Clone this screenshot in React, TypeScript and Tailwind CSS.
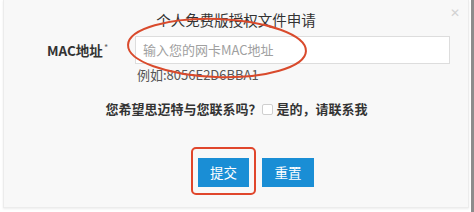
import React from "react";

export default function App() {
  const font = { fontFamily: '"Noto Sans CJK SC", "Noto Sans", sans-serif' };
  return (
    <div className="relative w-[474px] h-[212px] bg-white overflow-hidden" style={font}>
      <div className="absolute right-0 top-0 w-[3px] h-[212px] bg-[#8c8c8c]" />
      <div className="ml-[3px] w-[466px] h-[208px] bg-[#f8f8f8] border-l border-r border-b border-[#ececec] shadow-[0_1px_2px_rgba(0,0,0,0.08)] relative flex flex-col">
        <div className="absolute top-[6px] right-[8px] text-[#d2d2d2] text-[12px] leading-none">✕</div>
        <div className="pt-[10px] h-[33px] text-center text-[14.5px] leading-[20px] text-[#333]">
          个人免费版授权文件申请
        </div>
        <div className="flex items-center h-[28px] mt-[3px]">
          <div className="w-[131px] pl-[43px] text-[13.5px] font-bold text-[#333] flex items-start">
            <span>MAC地址</span>
            <span className="text-[9px] font-normal text-[#666] ml-[1px] mt-[1px]">*</span>
          </div>
          <div className="w-[315px] h-[28px] bg-white border border-[#dddddd] flex items-center pl-[7px] text-[13px] text-[#a0a0a0]">
            输入您的网卡MAC地址
          </div>
        </div>
        <div className="pl-[133px] mt-[2px] text-[13px] leading-[18px] text-[#555]">例如:8056E2D6BBA1</div>
        <div className="flex items-center justify-center mt-[16px] text-[13px] font-bold text-[#333] leading-[18px] pl-[1px]">
          <span>您希望思迈特与您联系吗？</span>
          <span className="w-[11px] h-[11px] border border-[#cfcfcf] bg-white rounded-[2px] mr-[4px]" />
          <span>是的，请联系我</span>
        </div>
        <div className="flex gap-[13px] pl-[194px] mt-[40px]">
          <div className="relative">
            <div className="absolute -left-[7px] -top-[11px] w-[65px] h-[48px] border-2 border-[#e0462c] rounded-[5px]" />
            <div className="w-[51px] h-[29px] bg-[#1a8ed5] text-white text-[13.5px] flex items-center justify-center">提交</div>
          </div>
          <div className="w-[52px] h-[29px] bg-[#1a8ed5] text-white text-[13.5px] flex items-center justify-center">重置</div>
        </div>
        <svg className="absolute left-0 top-0 pointer-events-none" width="466" height="208">
          <ellipse cx="213" cy="48" rx="89" ry="29" fill="none" stroke="#d94a2c" strokeWidth="2" transform="rotate(2 213 48)" />
        </svg>
      </div>
    </div>
  );
}
